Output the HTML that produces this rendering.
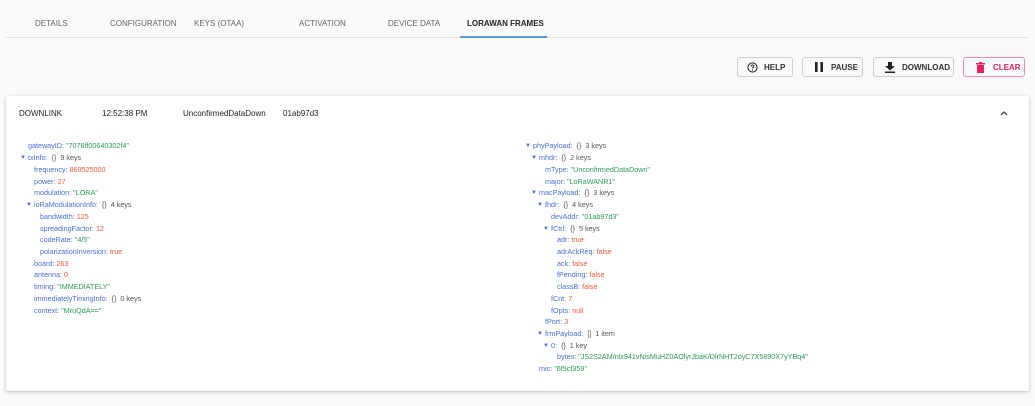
<!DOCTYPE html>
<html><head><meta charset="utf-8"><style>
body{margin:0;width:1035px;height:406px;background:#fafafa;font-family:"Liberation Sans",Arial,sans-serif;position:relative;overflow:hidden}
.tab{position:absolute;top:19px;font-size:8px;color:#666}
.btn{position:absolute;top:57px;height:20px;border:1px solid #d0d0d0;border-radius:3px;background:#fafafa;font-size:8px;font-weight:bold;color:#333;display:flex;align-items:center;box-sizing:border-box}
.card{position:absolute;left:6px;top:96px;width:1023px;height:295px;background:#fff;box-shadow:0 1px 3px rgba(0,0,0,.25);border-radius:2px}
.h{position:absolute;top:109px;font-size:8px;color:#222}
.l{position:absolute;font-size:7.2px;line-height:10px;white-space:nowrap;color:#444}
.k{color:#4a6fd6}.s{color:#2c9a5a}.n{color:#ef5a3c}.m{color:#555}
.a{position:absolute;font-size:6px;color:#4a6fd6;line-height:10px}
</style></head><body>
<div class="tab" style="left:35px">DETAILS</div>
<div class="tab" style="left:110px">CONFIGURATION</div>
<div class="tab" style="left:194px">KEYS (OTAA)</div>
<div class="tab" style="left:299px">ACTIVATION</div>
<div class="tab" style="left:388px">DEVICE DATA</div>
<div class="tab" style="left:467px;color:#222;font-weight:bold">LORAWAN FRAMES</div>
<div style="position:absolute;left:6px;top:37px;width:1023px;height:1px;background:#e3e3e3"></div>
<div style="position:absolute;left:460px;top:36px;width:87px;height:2px;background:#5b9bd5"></div>

<div class="btn" style="left:737px;width:56px"><svg style="margin:0 6px 0 9px" width="11" height="11" viewBox="0 0 24 24"><circle cx="12" cy="12" r="10" fill="none" stroke="#222" stroke-width="2.2"/><path d="M9 9.5a3 3 0 1 1 4 2.8c-.8.4-1 1-1 2" fill="none" stroke="#222" stroke-width="2.2"/><circle cx="12" cy="17.5" r="1.3" fill="#222"/></svg>HELP</div>
<div class="btn" style="left:802px;width:61px"><svg style="margin:0 8px 0 12px" width="8" height="10" viewBox="0 0 8 10"><rect x="0" y="0" width="2.6" height="10" fill="#222"/><rect x="5.4" y="0" width="2.6" height="10" fill="#222"/></svg>PAUSE</div>
<div class="btn" style="left:873px;width:81px"><svg style="margin:0 7px 0 11px" width="10" height="11" viewBox="0 0 10 11"><path d="M3 0h4v4h3L5 8.5 0 4h3z" fill="#222"/><rect x="0" y="9.5" width="10" height="1.5" fill="#222"/></svg>DOWNLOAD</div>
<div class="btn" style="left:963px;width:62px;border-color:#f48fb1;color:#e91e63"><svg style="margin:0 8px 0 12px" width="9" height="11" viewBox="0 0 9 11"><rect x="0" y="1" width="9" height="1.5" fill="#e91e63"/><rect x="3" y="0" width="3" height="1.5" fill="#e91e63"/><rect x="1" y="3" width="7" height="8" fill="#e91e63"/></svg>CLEAR</div>

<div class="card"></div>
<div class="h" style="left:19px">DOWNLINK</div>
<div class="h" style="left:102px">12:52:38 PM</div>
<div class="h" style="left:183px">UnconfirmedDataDown</div>
<div class="h" style="left:283px">01ab97d3</div>
<svg style="position:absolute;left:1000px;top:110px" width="8" height="6" viewBox="0 0 8 6"><path d="M1 5l3-3 3 3" fill="none" stroke="#444" stroke-width="1.3"/></svg>

<div class="l" style="left:28px;top:141px"><span class="k">gatewayID:</span> <span class="s">"7076ff00640302f4"</span></div>
<div class="a" style="left:20px;top:153px">▼</div><div class="l" style="left:28px;top:153px"><span class="k">txInfo:</span> <span class="m">&nbsp;{}&nbsp; 9 keys</span></div>
<div class="l" style="left:34px;top:165px"><span class="k">frequency:</span> <span class="n">869525000</span></div>
<div class="l" style="left:34px;top:177px"><span class="k">power:</span> <span class="n">27</span></div>
<div class="l" style="left:34px;top:188px"><span class="k">modulation:</span> <span class="s">"LORA"</span></div>
<div class="a" style="left:26px;top:200px">▼</div><div class="l" style="left:34px;top:200px"><span class="k">loRaModulationInfo:</span> <span class="m">&nbsp;{}&nbsp; 4 keys</span></div>
<div class="l" style="left:40px;top:212px"><span class="k">bandwidth:</span> <span class="n">125</span></div>
<div class="l" style="left:40px;top:224px"><span class="k">spreadingFactor:</span> <span class="n">12</span></div>
<div class="l" style="left:40px;top:235px"><span class="k">codeRate:</span> <span class="s">"4/5"</span></div>
<div class="l" style="left:40px;top:247px"><span class="k">polarizationInversion:</span> <span class="n">true</span></div>
<div class="l" style="left:34px;top:259px"><span class="k">board:</span> <span class="n">263</span></div>
<div class="l" style="left:34px;top:270px"><span class="k">antenna:</span> <span class="n">0</span></div>
<div class="l" style="left:34px;top:282px"><span class="k">timing:</span> <span class="s">"IMMEDIATELY"</span></div>
<div class="l" style="left:34px;top:294px"><span class="k">immediatelyTimingInfo:</span> <span class="m">&nbsp;{}&nbsp; 0 keys</span></div>
<div class="l" style="left:34px;top:306px"><span class="k">context:</span> <span class="s">"MruQdA=="</span></div>

<div class="a" style="left:525px;top:141px">▼</div><div class="l" style="left:533px;top:141px"><span class="k">phyPayload:</span> <span class="m">&nbsp;{}&nbsp; 3 keys</span></div>
<div class="a" style="left:531px;top:153px">▼</div><div class="l" style="left:539px;top:153px"><span class="k">mhdr:</span> <span class="m">&nbsp;{}&nbsp; 2 keys</span></div>
<div class="l" style="left:545px;top:165px"><span class="k">mType:</span> <span class="s">"UnconfirmedDataDown"</span></div>
<div class="l" style="left:545px;top:177px"><span class="k">major:</span> <span class="s">"LoRaWANR1"</span></div>
<div class="a" style="left:531px;top:188px">▼</div><div class="l" style="left:539px;top:188px"><span class="k">macPayload:</span> <span class="m">&nbsp;{}&nbsp; 3 keys</span></div>
<div class="a" style="left:537px;top:200px">▼</div><div class="l" style="left:545px;top:200px"><span class="k">fhdr:</span> <span class="m">&nbsp;{}&nbsp; 4 keys</span></div>
<div class="l" style="left:551px;top:212px"><span class="k">devAddr:</span> <span class="s">"01ab97d3"</span></div>
<div class="a" style="left:543px;top:224px">▼</div><div class="l" style="left:551px;top:224px"><span class="k">fCtrl:</span> <span class="m">&nbsp;{}&nbsp; 5 keys</span></div>
<div class="l" style="left:557px;top:235px"><span class="k">adr:</span> <span class="n">true</span></div>
<div class="l" style="left:557px;top:247px"><span class="k">adrAckReq:</span> <span class="n">false</span></div>
<div class="l" style="left:557px;top:259px"><span class="k">ack:</span> <span class="n">false</span></div>
<div class="l" style="left:557px;top:270px"><span class="k">fPending:</span> <span class="n">false</span></div>
<div class="l" style="left:557px;top:282px"><span class="k">classB:</span> <span class="n">false</span></div>
<div class="l" style="left:551px;top:294px"><span class="k">fCnt:</span> <span class="n">7</span></div>
<div class="l" style="left:551px;top:306px"><span class="k">fOpts:</span> <span class="n">null</span></div>
<div class="l" style="left:545px;top:317px"><span class="k">fPort:</span> <span class="n">3</span></div>
<div class="a" style="left:537px;top:329px">▼</div><div class="l" style="left:545px;top:329px"><span class="k">frmPayload:</span> <span class="m">&nbsp;[]&nbsp; 1 item</span></div>
<div class="a" style="left:543px;top:341px">▼</div><div class="l" style="left:551px;top:341px"><span class="k">0:</span> <span class="m">&nbsp;{}&nbsp; 1 key</span></div>
<div class="l" style="left:557px;top:352px"><span class="k">bytes:</span> <span class="s">"JS2S2AM/nlx941vNisMuHZ0AOlyrJbaK/DlrNHT2oyC7X5890X7yYBq4"</span></div>
<div class="l" style="left:539px;top:364px"><span class="k">mic:</span> <span class="s">"6f5cf359"</span></div>
</body></html>
